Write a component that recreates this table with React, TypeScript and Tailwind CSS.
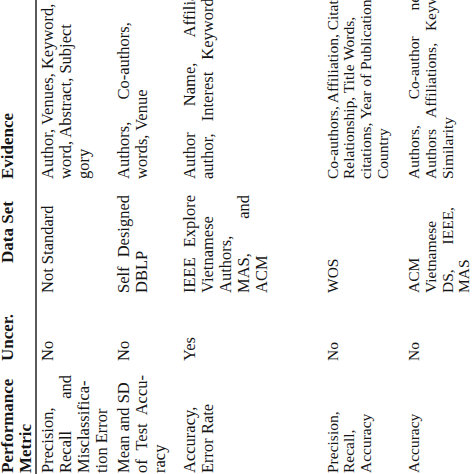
import React from "react";

type Line = { t: React.ReactNode; j?: boolean; cls?: string };
type CellSpec = { lines: (string | Line)[]; cls?: string };

const JUST = "text-justify [text-align-last:justify]";

function Cell({ spec, width }: { spec: CellSpec; width: string }) {
  return (
    <div className={`${width} ${spec.cls ?? ""}`}>
      {spec.lines.map((l, i) => {
        const line: Line = typeof l === "string" ? { t: l } : l;
        return (
          <div
            key={i}
            className={`${line.j ? JUST : "whitespace-nowrap"} ${line.cls ?? ""}`}
          >
            {line.t}
          </div>
        );
      })}
    </div>
  );
}

function Row({
  cells,
  cls,
}: {
  cells: [CellSpec, CellSpec, CellSpec, CellSpec];
  cls: string;
}) {
  return (
    <div className={`grid grid-cols-[112px_68px_114px_300px] ${cls}`}>
      <Cell spec={cells[0]} width="w-[98px]" />
      <Cell spec={cells[1]} width="w-[56px]" />
      <Cell spec={cells[2]} width="w-[98px]" />
      <Cell spec={cells[3]} width="w-[300px]" />
    </div>
  );
}

export default function App() {
  return (
    <div className="w-[474px] h-[474px] overflow-hidden bg-white">
      <div className="w-[474px] h-[474px] -rotate-90 overflow-hidden bg-white text-[#151515] font-['Liberation_Serif',serif]">
        <div className="pl-[1px] text-[17px] leading-[18px]">
          {/* header */}
          <div className="grid grid-cols-[112px_68px_114px_300px] -mt-[1px] font-bold">
            <div className="whitespace-nowrap">
              <div>Performance</div>
              <div>Metric</div>
            </div>
            <div className="whitespace-nowrap">Uncer.</div>
            <div className="whitespace-nowrap ml-[30px]">Data Set</div>
            <div className="whitespace-nowrap">Evidence</div>
          </div>
        </div>
        <div className="h-[1.5px] bg-[#5a5a5a]" />
        <div className="pl-[1px] text-[16.5px] leading-[18px]">
          <Row
            cls="mt-[2px]"
            cells={[
              {
                lines: [
                  "Precision,",
                  { t: "Recall and", j: true },
                  "Misclassifica-",
                  "tion Error",
                ],
              },
              { lines: ["No"] },
              { lines: ["Not Standard"] },
              {
                lines: [
                  "Author, Venues, Keyword,",
                  "word, Abstract, Subject",
                  "gory",
                ],
              },
            ]}
          />
          <Row
            cls="mt-[4px]"
            cells={[
              {
                lines: [
                  "Mean and SD",
                  { t: "of Test Accu-", j: true },
                  "racy",
                ],
              },
              { lines: ["No"] },
              { lines: [{ t: "Self Designed", j: true }, "DBLP"] },
              {
                lines: [
                  { t: "Authors, Co-authors,", cls: "[word-spacing:18px]" },
                  "words, Venue",
                ],
              },
            ]}
          />
          <Row
            cls="mt-[12px]"
            cells={[
              { lines: ["Accuracy,", "Error Rate"] },
              { lines: ["Yes"] },
              {
                lines: [
                  { t: "IEEE Explore", j: true },
                  "Vietnamese",
                  "Authors,",
                  { t: "MAS, and", j: true },
                  "ACM",
                ],
              },
              {
                lines: [
                  { t: "Author Name, Affiliation", cls: "[word-spacing:22px]" },
                  { t: "author, Interest Keywords", cls: "[word-spacing:8px]" },
                ],
              },
            ]}
          />
        </div>
        <div className="pl-[1px] text-[15.5px] leading-[16.7px]">
          <Row
            cls="mt-[54px]"
            cells={[
              { lines: ["Precision,", "Recall,", "Accuracy"] },
              { lines: ["No"] },
              { lines: ["WOS"] },
              {
                lines: [
                  "Co-authors, Affiliation, Citation",
                  "Relationship, Title Words,",
                  "citations, Year of Publication,",
                  "Country",
                ],
              },
            ]}
          />
          <Row
            cls="mt-[15px]"
            cells={[
              { lines: ["Accuracy"] },
              { lines: ["No"] },
              {
                lines: [
                  "ACM",
                  "Vietnamese",
                  { t: "DS, IEEE,", j: true, cls: "w-[86px]" },
                  "MAS",
                ],
              },
              {
                lines: [
                  { t: "Authors, Co-author network", cls: "[word-spacing:22px]" },
                  { t: "Authors Affiliations, Keywords", cls: "[word-spacing:8px]" },
                  "Similarity",
                ],
              },
            ]}
          />
        </div>
      </div>
    </div>
  );
}
